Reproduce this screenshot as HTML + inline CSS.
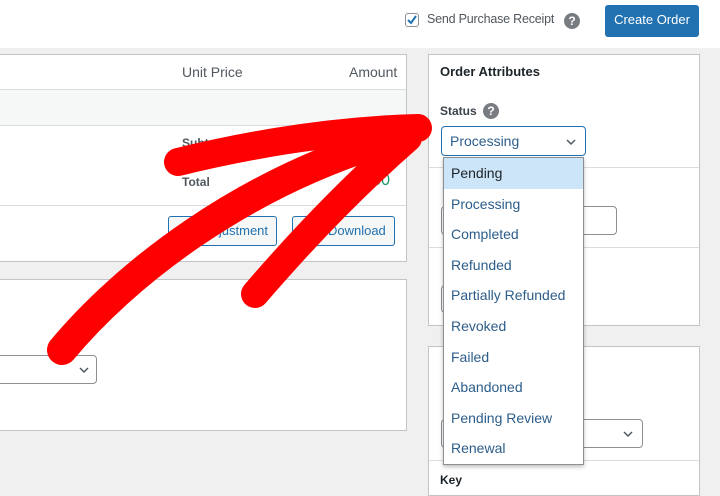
<!DOCTYPE html>
<html><head><style>
body{margin:0;width:720px;height:492px;overflow:hidden;background:#f0f0f1;font-family:"Liberation Sans",sans-serif;font-size:14px;color:#1d2327;position:relative}
.a{position:absolute}
.box{position:absolute;background:#fff;border:1px solid #c3c4c7;box-sizing:border-box}
.btn{position:absolute;border:1px solid #2271b1;border-radius:3px;background:#f6f7f7;color:#2271b1;font-size:13px;box-sizing:border-box;text-align:center;line-height:28px}
.help{position:absolute;width:16px;height:16px;border-radius:50%;background:#787c82;color:#fff;font-size:12px;font-weight:bold;text-align:center;line-height:16px}
.sel{position:absolute;border:1px solid #8c8f94;border-radius:4px;background:#fff;box-sizing:border-box}
.dd div{height:30.6px;line-height:30px;padding-left:7px;color:#2c5d8a;font-size:14px}
</style></head><body>
<div class="a" style="left:0;top:0;width:720px;height:48px;background:#fff"></div>
<div class="a" style="left:405px;top:13px;width:14px;height:14px;border:1px solid #8c8f94;border-radius:3px;background:#fff;box-sizing:border-box"><svg width="14" height="14" style="position:absolute;left:-1px;top:-1px"><path d="M3 7l3 3 5-7" stroke="#2271b1" stroke-width="2" fill="none"/></svg></div>
<div class="a" style="left:427px;top:12px;color:#50575e;font-size:12.5px;letter-spacing:-0.2px">Send Purchase Receipt</div>
<div class="help" style="left:564px;top:13px">?</div>
<div class="a" style="left:605px;top:5px;width:94px;height:32px;background:#2271b1;border-radius:3px;color:#fff;font-size:13px;text-align:center;line-height:30px">Create Order</div>

<div class="box" style="left:-1px;top:54px;width:408px;height:208px"></div>
<div class="a" style="left:182px;top:64px;color:#50575e">Unit Price</div>
<div class="a" style="left:349px;top:64px;color:#50575e">Amount</div>
<div class="a" style="left:0;top:89px;width:406px;height:1px;background:#dcdcde"></div>
<div class="a" style="left:0;top:90px;width:406px;height:35px;background:#f6f7f7;border-bottom:1px solid #dcdcde"></div>
<div class="a" style="left:182px;top:136px;font-weight:bold;font-size:12px;color:#50575e">Subtotal</div>
<div class="a" style="left:182px;top:175px;font-weight:bold;font-size:12px;color:#50575e">Total</div>
<div class="a" style="left:350px;top:172px;color:#1e9a6a;font-size:16px">$0.00</div>
<div class="a" style="left:0;top:205px;width:406px;height:1px;background:#dcdcde"></div>
<div class="btn" style="left:168px;top:216px;width:109px;height:30px">Add Adjustment</div>
<div class="btn" style="left:292px;top:216px;width:103px;height:30px">Add Download</div>

<div class="box" style="left:-1px;top:279px;width:408px;height:152px"></div>
<div class="sel" style="left:-5px;top:355px;width:102px;height:29px"><svg class="a" style="left:83px;top:9px" width="10" height="10"><path d="M1 3l4 4 4-4" stroke="#50575e" stroke-width="1.5" fill="none"/></svg></div>

<div class="box" style="left:428px;top:54px;width:272px;height:272px"></div>
<div class="a" style="left:440px;top:64px;font-weight:bold;font-size:13px">Order Attributes</div>
<div class="a" style="left:440px;top:104px;font-weight:bold;font-size:12px;color:#3c434a">Status</div>
<div class="help" style="left:483px;top:103px">?</div>
<div class="sel" style="left:441px;top:126px;width:145px;height:30px;border-color:#2271b1;border-width:1.5px"><span class="a" style="left:8px;top:6px;color:#2c5d8a">Processing</span><svg class="a" style="left:124px;top:10px" width="10" height="10"><path d="M1 3l4 4 4-4" stroke="#50575e" stroke-width="1.5" fill="none"/></svg></div>
<div class="a" style="left:429px;top:167px;width:270px;height:1px;background:#dcdcde"></div>
<div class="sel" style="left:441px;top:206px;width:176px;height:29px"></div>
<div class="a" style="left:429px;top:247px;width:270px;height:1px;background:#dcdcde"></div>
<div class="sel" style="left:441px;top:285px;width:40px;height:28px"></div>

<div class="box" style="left:428px;top:346px;width:272px;height:150px"></div>
<div class="sel" style="left:441px;top:419px;width:202px;height:29px"><svg class="a" style="left:181px;top:9px" width="10" height="10"><path d="M1 3l4 4 4-4" stroke="#50575e" stroke-width="1.5" fill="none"/></svg></div>
<div class="a" style="left:429px;top:460px;width:270px;height:1px;background:#dcdcde"></div>
<div class="a" style="left:440px;top:473px;font-weight:bold;font-size:12px">Key</div>

<div class="a dd" style="left:443px;top:157px;width:141px;height:308px;background:#fff;border:1px solid #8c8f94;box-sizing:border-box;box-shadow:0 2px 4px rgba(0,0,0,.25)">
<div style="background:#cce5f8;color:#1d2327">Pending</div><div>Processing</div><div>Completed</div><div>Refunded</div><div>Partially Refunded</div><div>Revoked</div><div>Failed</div><div>Abandoned</div><div>Pending Review</div><div>Renewal</div>
</div>

<svg class="a" style="left:0;top:0" width="720" height="492">
<g stroke="#ff0000" stroke-linecap="round" fill="none">
<path d="M62 350 C120 280 240 180 405 135" stroke-width="30"/>
<path d="M178 162 C260 142 340 130 418 128" stroke-width="28"/>
<path d="M255 294 C310 230 360 180 408 138" stroke-width="28"/>
</g>
</svg>
</body></html>
